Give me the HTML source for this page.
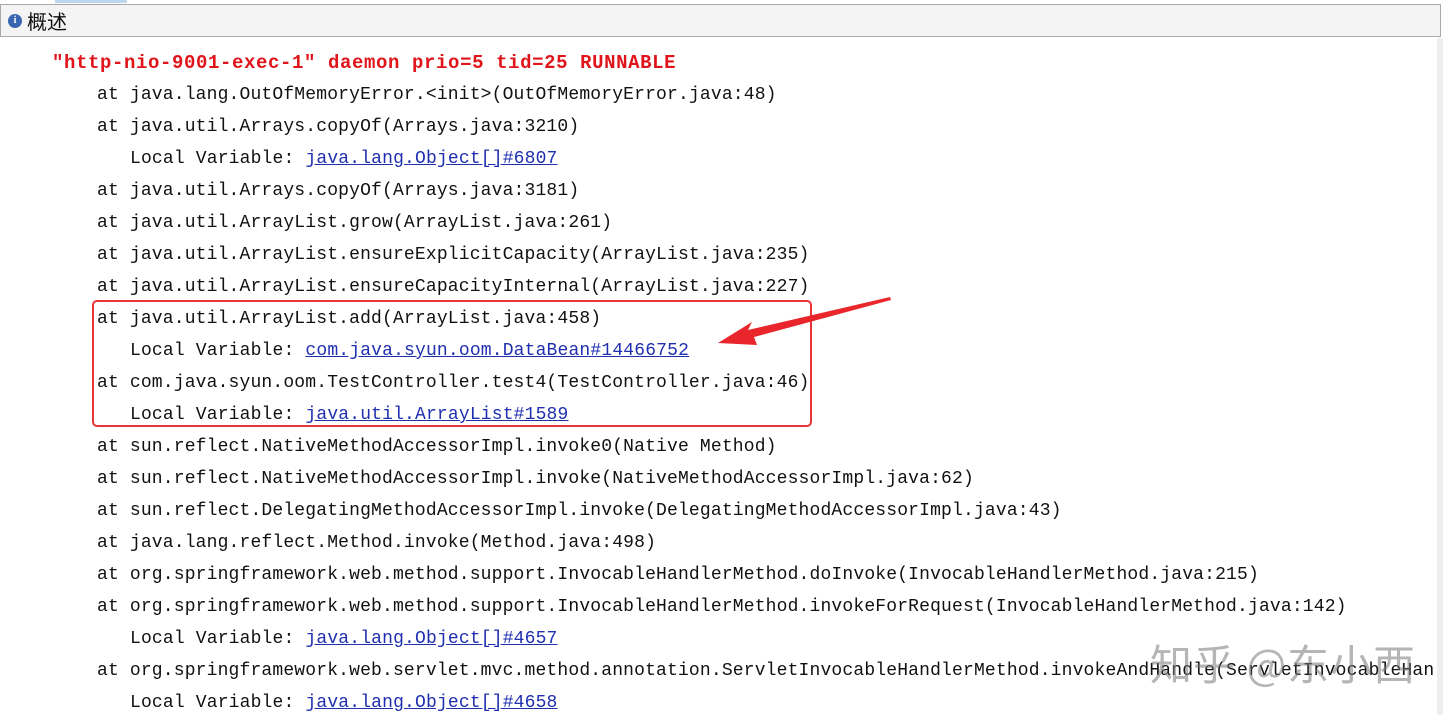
<!DOCTYPE html>
<html><head><meta charset="utf-8"><style>
body{margin:0;width:1443px;height:715px;background:#fff;overflow:hidden;position:relative;font-family:"Liberation Mono","Noto Sans CJK SC",monospace;}
.tab{position:absolute;left:55px;top:0;width:72px;height:3px;background:#bcd7ee;}
.hdr{position:absolute;left:0;top:4px;width:1441px;height:33px;background:#f4f4f4;border:1px solid #a9a9a9;box-sizing:border-box;}
.hdr .ic{position:absolute;left:7px;top:9px;width:14px;height:14px;border-radius:50%;background:#3a66b0;color:#fff;font:bold 10px "Liberation Serif",serif;text-align:center;line-height:14px;}
.hdr .t{position:absolute;left:26px;top:2px;font:20px "Noto Sans CJK SC",sans-serif;color:#111;line-height:28px;}
.sb{position:absolute;right:0;top:38px;width:6px;height:677px;background:#eee;}
.l{position:absolute;font-size:18px;line-height:32px;white-space:pre;color:#111;letter-spacing:0.16px;}
.red{color:#e0141b;font-weight:bold;font-size:19px;letter-spacing:0.6px;}
a{color:#1f2fb0;text-decoration:underline;}
.box{position:absolute;left:92px;top:300px;width:720px;height:127px;border:2px solid #e8353a;border-radius:5px;box-sizing:border-box;}
.wm{position:absolute;left:1150px;top:632px;font:42px "Noto Sans CJK SC",sans-serif;color:rgba(120,120,120,0.55);white-space:nowrap;letter-spacing:1px;}
</style></head><body>
<div class="tab"></div>
<div class="hdr"><div class="ic">i</div><div class="t">概述</div></div>
<div class="sb"></div>
<div class="l red" style="left:52px;top:47px">"http-nio-9001-exec-1" daemon prio=5 tid=25 RUNNABLE</div>
<div class="l" style="left:97px;top:79px">at java.lang.OutOfMemoryError.&lt;init&gt;(OutOfMemoryError.java:48)</div>
<div class="l" style="left:97px;top:111px">at java.util.Arrays.copyOf(Arrays.java:3210)</div>
<div class="l" style="left:130px;top:143px">Local Variable: <a>java.lang.Object[]#6807</a></div>
<div class="l" style="left:97px;top:175px">at java.util.Arrays.copyOf(Arrays.java:3181)</div>
<div class="l" style="left:97px;top:207px">at java.util.ArrayList.grow(ArrayList.java:261)</div>
<div class="l" style="left:97px;top:239px">at java.util.ArrayList.ensureExplicitCapacity(ArrayList.java:235)</div>
<div class="l" style="left:97px;top:271px">at java.util.ArrayList.ensureCapacityInternal(ArrayList.java:227)</div>
<div class="l" style="left:97px;top:303px">at java.util.ArrayList.add(ArrayList.java:458)</div>
<div class="l" style="left:130px;top:335px">Local Variable: <a>com.java.syun.oom.DataBean#14466752</a></div>
<div class="l" style="left:97px;top:367px">at com.java.syun.oom.TestController.test4(TestController.java:46)</div>
<div class="l" style="left:130px;top:399px">Local Variable: <a>java.util.ArrayList#1589</a></div>
<div class="l" style="left:97px;top:431px">at sun.reflect.NativeMethodAccessorImpl.invoke0(Native Method)</div>
<div class="l" style="left:97px;top:463px">at sun.reflect.NativeMethodAccessorImpl.invoke(NativeMethodAccessorImpl.java:62)</div>
<div class="l" style="left:97px;top:495px">at sun.reflect.DelegatingMethodAccessorImpl.invoke(DelegatingMethodAccessorImpl.java:43)</div>
<div class="l" style="left:97px;top:527px">at java.lang.reflect.Method.invoke(Method.java:498)</div>
<div class="l" style="left:97px;top:559px">at org.springframework.web.method.support.InvocableHandlerMethod.doInvoke(InvocableHandlerMethod.java:215)</div>
<div class="l" style="left:97px;top:591px">at org.springframework.web.method.support.InvocableHandlerMethod.invokeForRequest(InvocableHandlerMethod.java:142)</div>
<div class="l" style="left:130px;top:623px">Local Variable: <a>java.lang.Object[]#4657</a></div>
<div class="l" style="left:97px;top:655px">at org.springframework.web.servlet.mvc.method.annotation.ServletInvocableHandlerMethod.invokeAndHandle(ServletInvocableHan</div>
<div class="l" style="left:130px;top:687px">Local Variable: <a>java.lang.Object[]#4658</a></div>
<div class="box"></div>
<svg style="position:absolute;left:0;top:0" width="1443" height="715"><polygon points="890,297 748,330 752,322 718,343 757,345 754,337 891,300" fill="#e8262b"/></svg>
<div class="wm">知乎 @东小西</div>
</body></html>
